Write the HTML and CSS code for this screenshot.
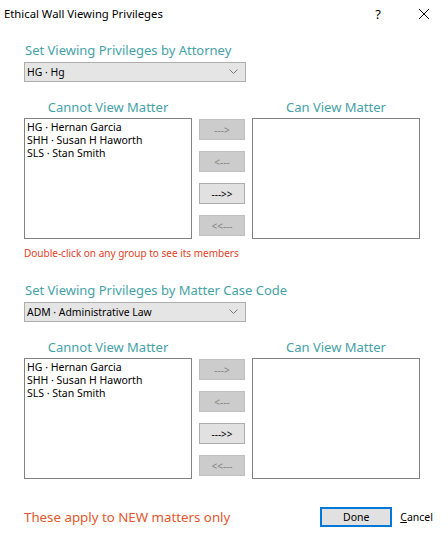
FILE: index.html
```html
<!DOCTYPE html>
<html>
<head>
<meta charset="utf-8">
<link rel="stylesheet" href="styles.css">
</head>
<body>
<div class="dialog">
  <div class="titlebar">
    <span class="title">Ethical Wall Viewing Privileges</span>
    <span class="help">?</span>
    <span class="close"><svg width="12" height="12" viewBox="0 0 12 12"><path d="M1 1L11 11M11 1L1 11" stroke="#000" stroke-width="1"/></svg></span>
  </div>
  <div class="content">
    <div class="section-title first">Set Viewing Privileges by Attorney</div>
    <div class="select"><span>HG · Hg</span><svg class="chev" width="9" height="6" viewBox="0 0 9 6"><path d="M0.5 0.5L4.5 4.5L8.5 0.5" fill="none" stroke="#777" stroke-width="1"/></svg></div>
    <div class="transfer">
      <div class="col-head">Cannot View Matter</div>
      <div></div>
      <div class="col-head">Can View Matter</div>
      <div class="list">
        <div>HG · Hernan Garcia</div>
        <div>SHH · Susan H Haworth</div>
        <div>SLS · Stan Smith</div>
      </div>
      <div class="buttons">
        <button class="btn disabled">---&gt;</button>
        <button class="btn disabled">&lt;---</button>
        <button class="btn">---&gt;&gt;</button>
        <button class="btn disabled">&lt;&lt;---</button>
      </div>
      <div class="list"></div>
    </div>
    <div class="hint">Double-click on any group to see its members</div>
    <div class="section-title second">Set Viewing Privileges by Matter Case Code</div>
    <div class="select"><span>ADM · Administrative Law</span><svg class="chev" width="9" height="6" viewBox="0 0 9 6"><path d="M0.5 0.5L4.5 4.5L8.5 0.5" fill="none" stroke="#777" stroke-width="1"/></svg></div>
    <div class="transfer">
      <div class="col-head">Cannot View Matter</div>
      <div></div>
      <div class="col-head">Can View Matter</div>
      <div class="list">
        <div>HG · Hernan Garcia</div>
        <div>SHH · Susan H Haworth</div>
        <div>SLS · Stan Smith</div>
      </div>
      <div class="buttons">
        <button class="btn disabled">---&gt;</button>
        <button class="btn disabled">&lt;---</button>
        <button class="btn">---&gt;&gt;</button>
        <button class="btn disabled">&lt;&lt;---</button>
      </div>
      <div class="list"></div>
    </div>
    <div class="footer">
      <span class="note">These apply to NEW matters only</span>
      <button class="done">Done</button>
      <span class="cancel"><u>C</u>ancel</span>
    </div>
  </div>
</div>
</body>
</html>
```
FILE: styles.css
```css
html, body {
  margin: 0;
  padding: 0;
  background: #ffffff;
}
body {
  font-family: "Noto Sans", "Open Sans", sans-serif;
  color: #000;
  width: 448px;
  height: 536px;
  overflow: hidden;
}
.dialog {
  display: flex;
  flex-direction: column;
  height: 536px;
}
.titlebar {
  height: 27px;
  display: flex;
  align-items: center;
  padding-left: 4px;
  font-size: 11.3px;
}
.title {
  flex: 1;
}
.help {
  width: 14px;
  text-align: center;
  font-size: 13px;
  margin-right: 33px;
}
.close {
  width: 12px;
  height: 12px;
  margin-right: 18px;
  display: flex;
}
.content {
  padding: 0 24px;
  display: flex;
  flex-direction: column;
}
.section-title {
  font-size: 13px;
  line-height: 18px;
  color: #45a2a7;
  padding-left: 1px;
}
.section-title.first {
  margin-top: 14px;
}
.section-title.second {
  margin-top: 21px;
}
.select {
  margin-top: 3px;
  width: 222px;
  height: 20px;
  box-sizing: border-box;
  border: 1px solid #adadad;
  background: #e5e5e5;
  display: flex;
  align-items: center;
  justify-content: space-between;
  padding: 0 7px 0 2px;
  font-size: 10.4px;
}
.chev {
  display: block;
}
.transfer {
  display: grid;
  grid-template-columns: 168px 46px 168px;
  column-gap: 7px;
  margin-top: 16px;
}
.col-head {
  font-size: 13px;
  line-height: 18px;
  color: #45a2a7;
  text-align: center;
  margin-bottom: 2px;
}
.list {
  height: 121px;
  box-sizing: border-box;
  border: 1px solid #828282;
  background: #fff;
  padding: 2px 2px;
  font-size: 10.5px;
  line-height: 13px;
}
.buttons {
  display: flex;
  flex-direction: column;
  gap: 11px;
  padding-top: 1px;
}
.btn {
  width: 46px;
  height: 21px;
  margin: 0;
  padding: 0;
  box-sizing: border-box;
  border: 1px solid #adadad;
  background: #e1e1e1;
  color: #000;
  font-family: "Noto Sans", "Open Sans", sans-serif;
  font-size: 10px;
  line-height: 18px;
}
.btn.disabled {
  background: #cccccc;
  border-color: #bfbfbf;
  color: #838383;
}
.hint {
  margin-top: 7px;
  font-size: 10px;
  line-height: 14px;
  color: #e2401f;
}
.footer {
  margin-top: 28px;
  display: flex;
  align-items: center;
}
.note {
  flex: 1;
  font-size: 13.3px;
  color: #e4562c;
}
.done {
  width: 72px;
  height: 20px;
  margin: 0;
  padding: 0;
  box-sizing: border-box;
  border: 2px solid #0078d7;
  background: #e1e1e1;
  font-family: "Noto Sans", "Open Sans", sans-serif;
  font-size: 10.5px;
  line-height: 16px;
  color: #000;
}
.cancel {
  margin-left: 8px;
  font-size: 10.5px;
  margin-right: -9px;
}
```
